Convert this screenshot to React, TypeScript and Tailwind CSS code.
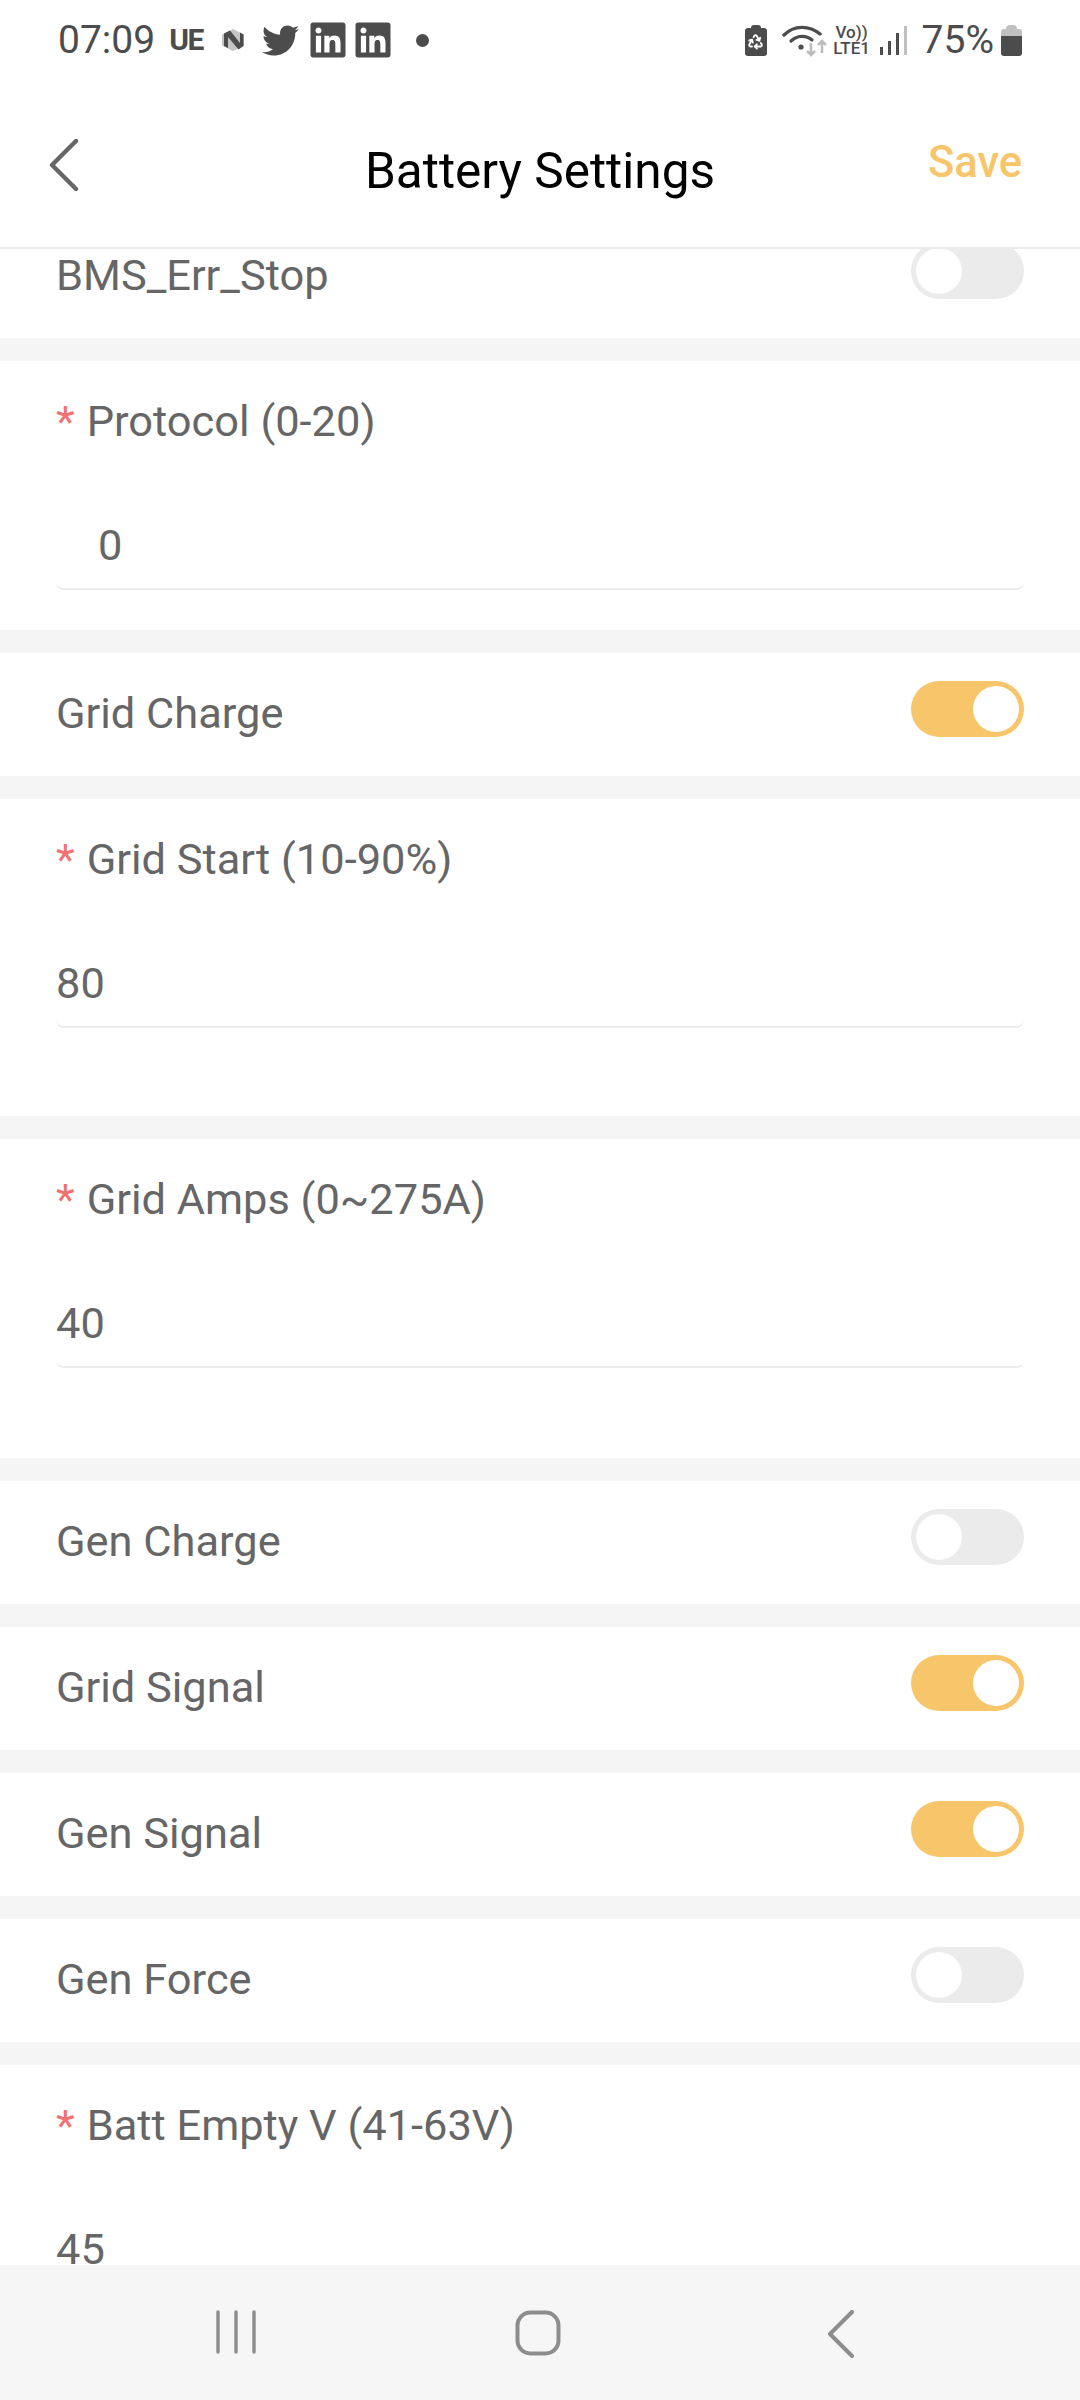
import { FaLinkedin, FaTwitter } from 'react-icons/fa'
import { Recycle } from 'lucide-react'

function Toggle({ on }: { on: boolean }) {
  return (
    <div
      className={`flex h-[56px] w-[113px] shrink-0 items-center rounded-full px-[5px] ${
        on ? 'justify-end bg-[#f7c56a]' : 'justify-start bg-[#ebebeb]'
      }`}
    >
      <div className="h-[46px] w-[46px] rounded-full bg-white" />
    </div>
  )
}

function SwitchRow({ label, on }: { label: string; on: boolean }) {
  return (
    <div className="flex h-[123px] justify-between bg-white pl-[56px] pr-[56px]">
      <span className="pt-[33px] text-[43.4px] leading-[56px] text-[#666666]">{label}</span>
      <div className="pt-[28px]">
        <Toggle on={on} />
      </div>
    </div>
  )
}

function FieldRow({ label, value, height, inset }: { label: string; value: string; height: string; inset?: boolean }) {
  return (
    <div className={`bg-white px-[56px] pt-[33px] ${height}`}>
      <div className="text-[43.4px] leading-[56px] text-[#666666]">
        <span className="mr-[12px] text-[#ee7272]">*</span>
        {label}
      </div>
      <div
        className={`mt-[68px] h-[72px] rounded-b-[8px] border-b-2 border-[#ececec] text-[43.4px] leading-[56px] text-[#666666] ${
          inset ? 'pl-[42px]' : ''
        }`}
      >
        {value}
      </div>
    </div>
  )
}

function Gap() {
  return <div className="h-[23px] bg-[#f5f5f5]" />
}

function StatusBar() {
  return (
    <div className="flex h-[80px] items-start justify-between pl-[58px] pr-[58px] pt-[22px] text-[#4c4c4c]">
      <div className="flex h-[36px] items-center">
        <span className="text-[39px] leading-[36px]">07:09</span>
        <span className="ml-[14px] text-[30px] font-bold leading-[36px] tracking-[-1.5px]">UE</span>
        <svg className="ml-[18px]" width="24" height="24" viewBox="0 0 24 24">
          <path d="M12 1 23 6.5V17.5L12 23 1 17.5V6.5Z" fill="#c4c4c4" />
          <path d="M3 5.5 9 2.5 19 15V4.5L22.5 6.5V18L17.5 21.5 7 9V20L3 18Z" fill="#4c4c4c" />
        </svg>
        <FaTwitter className="ml-[17px]" size={37} />
        <FaLinkedin className="ml-[9px]" size={40} />
        <FaLinkedin className="ml-[5px]" size={40} />
        <div className="ml-[23px] h-[13px] w-[13px] rounded-full bg-[#4c4c4c]" />
      </div>
      <div className="flex h-[36px] items-center">
        {/* battery saver */}
        <div className="flex h-[31px] w-[22px] flex-col items-center">
          <div className="h-[3px] w-[10px] rounded-t-sm bg-[#4c4c4c]" />
          <div className="flex h-[28px] w-[22px] items-center justify-center rounded-[3px] bg-[#4c4c4c]">
            <Recycle size={17} color="#ffffff" strokeWidth={2.6} />
          </div>
        </div>
        {/* wifi with traffic arrows */}
        <svg className="ml-[15px]" width="46" height="34" viewBox="0 0 46 34" fill="none">
          <path d="M2 12C12 2 27 2 38 11" stroke="#4c4c4c" strokeWidth="3.4" strokeLinecap="round" />
          <path d="M9 18C15 12 24 12 30 17" stroke="#4c4c4c" strokeWidth="3.2" strokeLinecap="round" />
          <circle cx="19" cy="24" r="2.6" fill="#4c4c4c" />
          <path d="M29 20V32M25 28L29 32 33 28" stroke="#bdbdbd" strokeWidth="2.6" />
          <path d="M40 30V18M36 22L40 18 44 22" stroke="#bdbdbd" strokeWidth="2.6" />
        </svg>
        <div className="ml-[5px] flex w-[38px] flex-col items-center text-[#4c4c4c]">
          <span className="text-[17px] font-medium leading-[16px]">Vo))</span>
          <span className="text-[17px] font-medium leading-[16px]">LTE1</span>
        </div>
        {/* signal strength */}
        <div className="ml-[9px] flex h-[30px] items-end gap-[5px]">
          <div className="h-[8px] w-[3px] bg-[#4c4c4c]" />
          <div className="h-[14px] w-[3px] bg-[#4c4c4c]" />
          <div className="h-[22px] w-[3px] bg-[#4c4c4c]" />
          <div className="h-[29px] w-[3px] bg-[#c0c0c0]" />
        </div>
        <span className="ml-[15px] text-[39px] leading-[36px]">75%</span>
        <div className="ml-[7px] flex h-[31px] w-[21px] flex-col items-center">
          <div className="h-[4px] w-[11px] rounded-t-sm bg-[#c0c0c0]" />
          <div className="h-[7px] w-[21px] rounded-t-[3px] bg-[#c0c0c0]" />
          <div className="h-[20px] w-[21px] rounded-b-[3px] bg-[#4c4c4c]" />
        </div>
      </div>
    </div>
  )
}

function Header() {
  return (
    <div className="flex h-[169px] shrink-0 items-start border-b-2 border-[#ececec]">
      <div className="h-full w-[200px] pl-[48px] pt-[58px]">
        <svg width="32" height="54" viewBox="0 0 32 54" fill="none">
          <path d="M28 3 4 27 28 51" stroke="#666666" strokeWidth="4.4" strokeLinecap="round" strokeLinejoin="round" />
        </svg>
      </div>
      <div className="flex-1 pt-[59px] text-center text-[49.5px] leading-[64px] text-black">Battery Settings</div>
      <div className="w-[200px] pr-[58px] pt-[57px] text-right text-[43.5px] font-medium leading-[52px] text-[#f7c56a]">
        Save
      </div>
    </div>
  )
}

function NavBar() {
  return (
    <div className="flex h-[135px] shrink-0 items-start bg-[#f6f6f6] pl-[215px] pt-[45px]">
      <svg width="42" height="44" viewBox="0 0 42 44" stroke="#8d8d8d" strokeWidth="3.4" strokeLinecap="round">
        <path d="M3 2V42M21 2V42M39 2V42" />
      </svg>
      <svg className="ml-[258px]" width="46" height="46" viewBox="0 0 46 46" fill="none">
        <rect x="2.5" y="2.5" width="41" height="41" rx="13" stroke="#8d8d8d" strokeWidth="4" />
      </svg>
      <svg className="ml-[265px]" width="30" height="48" viewBox="0 0 30 48" fill="none">
        <path d="M26 2 4 24 26 46" stroke="#8d8d8d" strokeWidth="4" strokeLinecap="round" strokeLinejoin="round" />
      </svg>
    </div>
  )
}

export default function App() {
  return (
    <div className="flex h-[2400px] w-[1080px] flex-col overflow-hidden bg-white font-['Roboto',sans-serif]">
      <StatusBar />
      <Header />
      <main className="min-h-0 flex-1 overflow-hidden">
        {/* list is scrolled down a little, the first row is cut by the header */}
        <div className="-mt-[34px]">
          <SwitchRow label="BMS_Err_Stop" on={false} />
          <Gap />
          <FieldRow label="Protocol (0-20)" value="0" height="h-[269px]" inset />
          <Gap />
          <SwitchRow label="Grid Charge" on />
          <Gap />
          <FieldRow label="Grid Start (10-90%)" value="80" height="h-[317px]" />
          <Gap />
          <FieldRow label="Grid Amps (0~275A)" value="40" height="h-[319px]" />
          <Gap />
          <SwitchRow label="Gen Charge" on={false} />
          <Gap />
          <SwitchRow label="Grid Signal" on />
          <Gap />
          <SwitchRow label="Gen Signal" on />
          <Gap />
          <SwitchRow label="Gen Force" on={false} />
          <Gap />
          <FieldRow label="Batt Empty V (41-63V)" value="45" height="h-[317px]" />
        </div>
      </main>
      <NavBar />
    </div>
  )
}
